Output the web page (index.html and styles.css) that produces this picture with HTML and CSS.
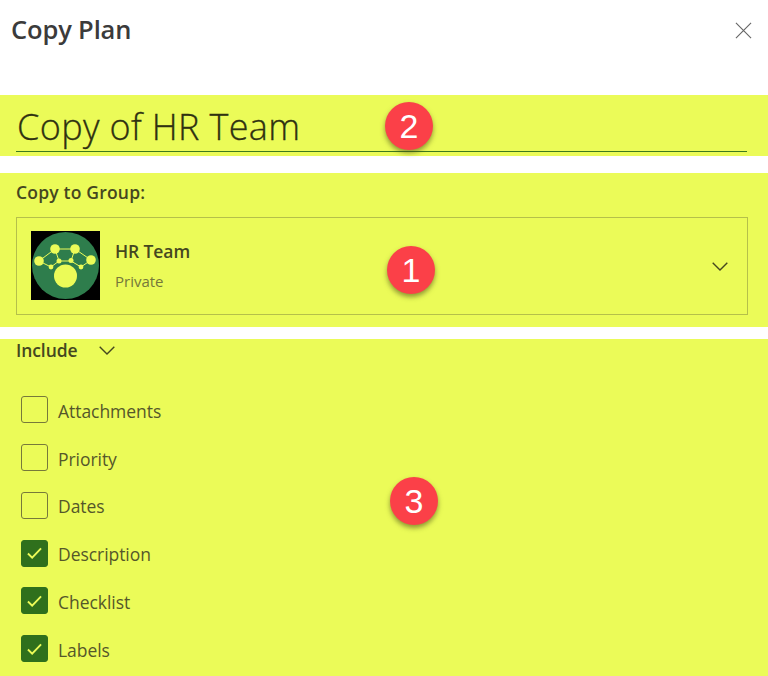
FILE: index.html
```html
<!DOCTYPE html>
<html lang="en">
<head>
<meta charset="utf-8">
<title>Copy Plan</title>
<link rel="stylesheet" href="styles.css">
</head>
<body>
<main class="dialog">
  <header class="header">
    <h1 class="title">Copy Plan</h1>
    <svg class="close" viewBox="0 0 18 18" aria-label="Close"><path d="M1 1 17 17M17 1 1 17"/></svg>
  </header>
  <section class="band name-band">
    <div class="name-field">Copy of HR Team</div>
    <span class="badge badge-2">2</span>
  </section>
  <section class="band group-band">
    <div class="group-label">Copy to Group:</div>
    <div class="group-select">
      <svg class="avatar" viewBox="0 0 69 69">
        <rect width="69" height="69" fill="#000"/>
        <circle cx="34.5" cy="34.5" r="33.5" fill="#2e7d4c"/>
        <path class="links" d="M8 30 24 18H44L60 29M8 30 20 36 28 30H40L50 36 60 29M24 18 28 30M44 18 40 30"/>
        <g class="nodes">
          <circle cx="24" cy="18" r="4.8"/><circle cx="44" cy="18" r="4.8"/>
          <circle cx="8" cy="30" r="4.8"/><circle cx="60" cy="29" r="4.8"/>
          <circle cx="28" cy="30" r="2.5"/><circle cx="40" cy="29.5" r="2.5"/>
          <circle cx="20" cy="36" r="2.4"/><circle cx="50" cy="36" r="2.4"/>
          <circle cx="34.5" cy="45" r="11.5"/>
        </g>
      </svg>
      <div class="group-text">
        <div class="group-name">HR Team</div>
        <div class="group-privacy">Private</div>
      </div>
      <svg class="chevron" viewBox="0 0 16 9"><path d="M.7.7 8 8 15.3.7"/></svg>
    </div>
    <span class="badge badge-1">1</span>
  </section>
  <section class="band include-band">
    <div class="include-head">
      <span>Include</span>
      <svg class="chevron" viewBox="0 0 16 9"><path d="M.7.7 8 8 15.3.7"/></svg>
    </div>
    <ul class="options">
      <li class="option"><span class="box"></span>Attachments</li>
      <li class="option"><span class="box"></span>Priority</li>
      <li class="option"><span class="box"></span>Dates</li>
      <li class="option"><span class="box checked"><svg viewBox="0 0 16 12"><path d="M1 6.5 5.5 11 15 1"/></svg></span>Description</li>
      <li class="option"><span class="box checked"><svg viewBox="0 0 16 12"><path d="M1 6.5 5.5 11 15 1"/></svg></span>Checklist</li>
      <li class="option"><span class="box checked"><svg viewBox="0 0 16 12"><path d="M1 6.5 5.5 11 15 1"/></svg></span>Labels</li>
    </ul>
    <span class="badge badge-3">3</span>
  </section>
</main>
</body>
</html>
```
FILE: styles.css
```css
* { box-sizing: border-box; }
html, body { margin: 0; padding: 0; background: #fff; }
body {
  width: 768px;
  height: 676px;
  overflow: hidden;
  font-family: "Open Sans", "Noto Sans", "Liberation Sans", sans-serif;
  color: #45471f;
}
.dialog { display: flex; flex-direction: column; height: 676px; }
.header {
  height: 95px;
  padding: 11px 16px 0 11px;
  display: flex;
  justify-content: space-between;
  align-items: flex-start;
}
.title {
  margin: 0;
  font-size: 25.5px;
  line-height: 36px;
  font-weight: 600;
  letter-spacing: -0.15px;
  color: #3b3b3b;
}
.close { width: 17px; height: 17px; margin-top: 11px; }
.close path { fill: none; stroke: #666; stroke-width: 1.2; }
.band { background: #ebfb58; position: relative; }
.name-band { height: 61px; padding: 8px 21px 0 16px; }
.name-field {
  height: 49px;
  padding-left: 1px;
  font-size: 36px;
  line-height: 48px;
  font-weight: 300;
  letter-spacing: 0.35px;
  color: #2f3110;
  -webkit-text-stroke: 0.3px #2f3110;
  border-bottom: 1px solid #3d7a1c;
}
.group-band { height: 154px; margin-top: 17px; padding: 7px 20px 0 16px; }
.group-label { font-size: 17.5px; line-height: 24px; font-weight: 600; letter-spacing: 0.2px; }
.group-select {
  height: 98px;
  margin-top: 13px;
  padding: 13px 19px 0 14px;
  display: flex;
  align-items: flex-start;
  border: 1px solid #b5c04a;
}
.avatar { width: 69px; height: 69px; flex: none; }
.links { fill: none; stroke: #ebfb58; stroke-width: 1; }
.nodes circle { fill: #ebfb58; }
.group-text { margin-left: 15px; flex: 1; }
.group-name { margin-top: 8px; font-size: 17.5px; line-height: 24px; font-weight: 600; letter-spacing: -0.1px; }
.group-privacy { margin-top: 8px; font-size: 15px; line-height: 20px; color: #75783a; letter-spacing: 0; }
.chevron { width: 16px; height: 9px; flex: none; }
.chevron path { fill: none; stroke: #45471f; stroke-width: 1.4; }
.group-select .chevron { margin-top: 31px; }
.include-band { flex: 1; margin-top: 12px; padding: 0 16px; }
.include-head {
  display: flex;
  align-items: center;
  gap: 22px;
  height: 22px;
  font-size: 17.5px;
  font-weight: 600;
  letter-spacing: -0.1px;
}
.options { list-style: none; margin: 26px 0 0; padding: 0 0 0 5px; }
.option {
  display: flex;
  align-items: center;
  gap: 10px;
  height: 47.75px;
  font-size: 17.5px;
  letter-spacing: -0.05px;
  color: #55572a;
}
.box {
  width: 27px;
  height: 27px;
  margin-bottom: 2px;
  border: 1.5px solid #77793a;
  border-radius: 3px;
  display: flex;
  align-items: center;
  justify-content: center;
}
.box.checked { background: #2f701c; border-color: #2f701c; }
.box svg { width: 15px; height: 12px; }
.box path { fill: none; stroke: #ebfb58; stroke-width: 2; }
.badge {
  position: absolute;
  width: 48px;
  height: 48px;
  border-radius: 50%;
  background: #fb4048;
  color: #fff;
  font-family: "Liberation Sans", Arial, sans-serif;
  font-size: 34px;
  line-height: 48px;
  text-align: center;
  box-shadow: 0 3px 5px rgba(70, 70, 20, .55);
}
.badge-2 { left: 385px; top: 7px; }
.badge-1 { left: 387px; top: 73px; }
.badge-3 { left: 390px; top: 138px; }
```
